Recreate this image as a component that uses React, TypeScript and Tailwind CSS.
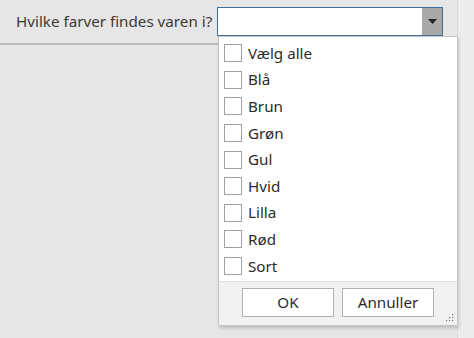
import React from "react";

const items = ["Vælg alle", "Blå", "Brun", "Grøn", "Gul", "Hvid", "Lilla", "Rød", "Sort"];

export default function App() {
  return (
    <div
      className="relative w-[474px] h-[338px] bg-[#ececec] overflow-hidden flex"
      style={{ fontFamily: '"Noto Sans", "Open Sans", sans-serif' }}
    >
      <div className="w-[458px] h-full bg-[#e6e6e6] border-r border-[#dadada] flex flex-col">
        <div className="h-[45px] border-b-2 border-[#bdbdbd] flex items-start pl-[16px] pt-[7px]">
          <span className="w-[201px] text-[15.2px] text-[#3a3a3a] leading-[29px] whitespace-nowrap">Hvilke farver findes varen i?</span>
          <div className="w-[226px] h-[29px] bg-white border border-[#41709a] flex justify-end">
            <div className="w-[20px] h-full bg-[#a8a8a8] flex items-center justify-center">
              <svg width="9" height="5" viewBox="0 0 9 5">
                <path d="M0 0 L9 0 L4.5 5 Z" fill="#222" />
              </svg>
            </div>
          </div>
        </div>
      </div>
      <div className="absolute left-[218px] top-[36px] w-[240px] h-[290px] bg-white border border-[#c6c6c6] shadow-[1px_2px_3px_rgba(0,0,0,0.18)] flex flex-col">
        <div className="flex flex-col pt-[3px] h-[244px]">
          {items.map((it) => (
            <div key={it} className="h-[26.6px] flex items-center pl-[5px]">
              <div className="w-[18px] h-[18px] border border-[#a0a0a0] bg-white mr-[6px]" />
              <span className="text-[15.2px] text-[#2b2b2b]">{it}</span>
            </div>
          ))}
        </div>
        <div className="flex-1 bg-[#f1f1f1] border-t border-[#e0e0e0] relative flex items-start pt-[6px] pl-[23px] gap-[8px]">
          <button className="w-[92px] h-[29px] bg-white border border-[#b0b0b0] text-[15.2px] text-[#2b2b2b]">OK</button>
          <button className="w-[92px] h-[29px] bg-white border border-[#b0b0b0] text-[15.2px] text-[#2b2b2b]">Annuller</button>
          <svg className="absolute right-[3px] bottom-[3px]" width="8" height="8" viewBox="0 0 8 8">
            <rect x="6" y="0" width="1.2" height="1.2" fill="#777" />
            <rect x="3" y="3" width="1.2" height="1.2" fill="#777" />
            <rect x="6" y="3" width="1.2" height="1.2" fill="#777" />
            <rect x="0" y="6" width="1.2" height="1.2" fill="#777" />
            <rect x="3" y="6" width="1.2" height="1.2" fill="#777" />
            <rect x="6" y="6" width="1.2" height="1.2" fill="#777" />
          </svg>
        </div>
      </div>
    </div>
  );
}
